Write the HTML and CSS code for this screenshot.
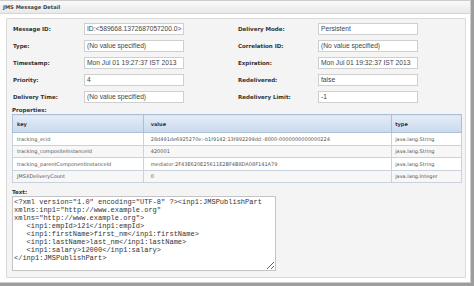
FILE: index.html
```html
<!DOCTYPE html>
<html lang="en">
<head>
  <meta charset="UTF-8">
  <title>JMS Message Detail</title>
  <link rel="stylesheet" href="styles.css">
</head>
<body>

  <div class="janela">
    <div class="janela-titulo">JMS Message Detail</div>

    <div class="detalhe">
      <div class="campos">
        <div class="rotulo">Message ID:</div>
        <div class="valor">ID:&lt;589668.1372687057200.0&gt;</div>
        <div class="rotulo">Delivery Mode:</div>
        <div class="valor">Persistent</div>

        <div class="rotulo">Type:</div>
        <div class="valor">(No value specified)</div>
        <div class="rotulo">Correlation ID:</div>
        <div class="valor">(No value specified)</div>

        <div class="rotulo">Timestamp:</div>
        <div class="valor">Mon Jul 01 19:27:37 IST 2013</div>
        <div class="rotulo">Expiration:</div>
        <div class="valor">Mon Jul 01 19:32:37 IST 2013</div>

        <div class="rotulo">Priority:</div>
        <div class="valor">4</div>
        <div class="rotulo">Redelivered:</div>
        <div class="valor">false</div>

        <div class="rotulo">Delivery Time:</div>
        <div class="valor">(No value specified)</div>
        <div class="rotulo">Redelivery Limit:</div>
        <div class="valor">-1</div>
      </div>

      <div class="secao">Properties:</div>
      <table class="propriedades">
        <thead>
          <tr>
            <th class="col-key">key</th>
            <th class="col-value">value</th>
            <th class="col-type">type</th>
          </tr>
        </thead>
        <tbody>
          <tr>
            <td>tracking_ecid</td>
            <td>28d491de6925270e:-b1f9142:13f992299dd:-8000-0000000000000224</td>
            <td>java.lang.String</td>
          </tr>
          <tr>
            <td>tracking_compositeInstanceId</td>
            <td>420001</td>
            <td>java.lang.String</td>
          </tr>
          <tr>
            <td>tracking_parentComponentInstanceId</td>
            <td>mediator:2F43E620E25611E2BF4B8DA08F141A79</td>
            <td>java.lang.String</td>
          </tr>
          <tr>
            <td>JMSXDeliveryCount</td>
            <td>0</td>
            <td>java.lang.Integer</td>
          </tr>
        </tbody>
      </table>

      <div class="secao secao-texto">Text:</div>
      <textarea class="texto" readonly>&lt;?xml version="1.0" encoding="UTF-8" ?&gt;&lt;inp1:JMSPublishPart
xmlns:inp1="http://www.example.org"
xmlns="http://www.example.org"&gt;
   &lt;inp1:empId&gt;121&lt;/inp1:empId&gt;
   &lt;inp1:firstName&gt;first_nm&lt;/inp1:firstName&gt;
   &lt;inp1:lastName&gt;last_nm&lt;/inp1:lastName&gt;
   &lt;inp1:salary&gt;12000&lt;/inp1:salary&gt;
&lt;/inp1:JMSPublishPart&gt;</textarea>
    </div>
  </div>

</body>
</html>
```

FILE: styles.css
```css
* {
  box-sizing: border-box;
}

body {
  margin: 0;
  background-color: #9d9d9d;
  font-family: "DejaVu Sans", sans-serif;
  color: #333;
}

.janela {
  width: 471px;
  height: 283px;
  background-color: #fff;
  border: 1px solid #cdcdcd;
  border-left: none;
  display: flex;
  flex-direction: column;
}

.janela-titulo {
  height: 13px;
  padding-left: 3px;
  line-height: 13px;
  font-size: 5.2px;
  font-weight: bold;
  color: #444;
  background: linear-gradient(#fafafa, #e9e9e9);
  border-bottom: 1px solid #d6d6d6;
}

.detalhe {
  flex: 1;
  margin: 4px 4px 4px 6px;
  padding: 4px 5px 0 5px;
  background-color: #f4f4f4;
  border: 1px solid #dadada;
}

/* grade dos campos: rotulo | valor | rotulo | valor */
.campos {
  display: grid;
  grid-template-columns: 72px 153px 81px 100px;
  grid-auto-rows: 12px;
  row-gap: 5px;
  align-items: center;
}

.rotulo {
  padding-left: 1px;
  font-size: 5.5px;
  font-weight: bold;
  color: #333;
}

.valor {
  width: 100px;
  height: 12px;
  padding-left: 2px;
  line-height: 10px;
  background-color: #fff;
  border: 1px solid #cfcfcf;
  font-family: "Liberation Sans", Arial, sans-serif;
  font-size: 6.7px;
  color: #444;
  white-space: nowrap;
  overflow: hidden;
}

.secao {
  margin-top: 4px;
  height: 7px;
  line-height: 7px;
  font-size: 5.5px;
  font-weight: bold;
  color: #333;
}

.propriedades {
  width: 450px;
  border-collapse: collapse;
  font-size: 5px;
  color: #555;
}

.propriedades th {
  height: 18px;
  padding: 0 4px;
  text-align: left;
  font-weight: bold;
  color: #333;
  background: linear-gradient(#e4ecf7, #cad9ee);
  border: 1px solid #aabfd8;
}

.propriedades td {
  height: 12.5px;
  padding: 0 4px;
  white-space: nowrap;
  background-color: #fff;
  border: 1px solid #c8d1dc;
}

.propriedades tbody tr:nth-child(even) td {
  background-color: #f7f7f7;
}

.col-key { width: 131px; }
.col-value { width: 249px; }
.col-type { width: 70px; }

.propriedades td:nth-child(2),
.propriedades th:nth-child(2) {
  padding-left: 7px;
}

.propriedades td:nth-child(3),
.propriedades th:nth-child(3) {
  padding-left: 3px;
}

.secao-texto {
  margin-top: 5px;
  height: 8px;
  line-height: 8px;
}

.texto {
  display: block;
  width: 264px;
  height: 75px;
  margin: 0;
  padding: 1px 1px;
  font-family: "Liberation Mono", "Courier New", monospace;
  font-size: 7px;
  line-height: 8px;
  color: #333;
  background-color: #fff;
  border: 1px solid #c4c4c4;
  white-space: pre;
  overflow: hidden;
  resize: both;
}
```
